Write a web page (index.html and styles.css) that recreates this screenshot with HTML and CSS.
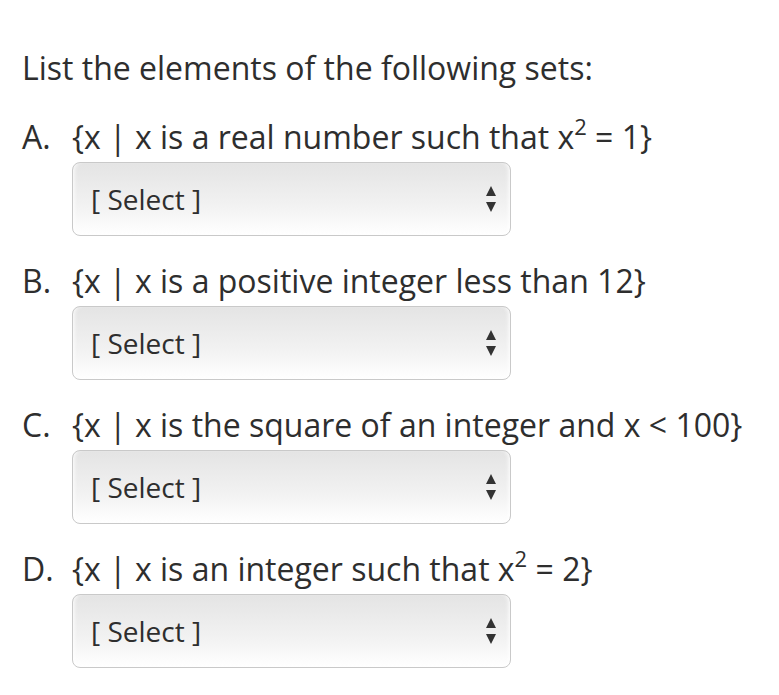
FILE: index.html
```html
<!DOCTYPE html>
<html lang="en">
<head>
  <meta charset="UTF-8" />
  <title>Sets question</title>
  <link rel="stylesheet" href="styles.css">
</head>
<body>

  <div class="question">
    <p class="prompt">List the elements of the following sets:</p>

    <div class="item">
      <div class="line"><span class="mark">A.</span>{x | x is a real number such that x<sup>2</sup> = 1}</div>
      <div class="pick">
        <select><option>[ Select ]</option></select>
        <svg class="arrows" width="10" height="26" viewBox="0 0 10 26"><path d="M5 0 L10 10 L0 10 Z M0 16 L10 16 L5 26 Z" fill="#333"/></svg>
      </div>
    </div>

    <div class="item">
      <div class="line"><span class="mark">B.</span>{x | x is a positive integer less than 12}</div>
      <div class="pick">
        <select><option>[ Select ]</option></select>
        <svg class="arrows" width="10" height="26" viewBox="0 0 10 26"><path d="M5 0 L10 10 L0 10 Z M0 16 L10 16 L5 26 Z" fill="#333"/></svg>
      </div>
    </div>

    <div class="item">
      <div class="line"><span class="mark">C.</span>{x | x is the square of an integer and x &lt; 100}</div>
      <div class="pick">
        <select><option>[ Select ]</option></select>
        <svg class="arrows" width="10" height="26" viewBox="0 0 10 26"><path d="M5 0 L10 10 L0 10 Z M0 16 L10 16 L5 26 Z" fill="#333"/></svg>
      </div>
    </div>

    <div class="item">
      <div class="line"><span class="mark">D.</span>{x | x is an integer such that x<sup>2</sup> = 2}</div>
      <div class="pick">
        <select><option>[ Select ]</option></select>
        <svg class="arrows" width="10" height="26" viewBox="0 0 10 26"><path d="M5 0 L10 10 L0 10 Z M0 16 L10 16 L5 26 Z" fill="#333"/></svg>
      </div>
    </div>
  </div>

</body>
</html>
```

FILE: styles.css
```css
body {
  margin: 0;
  background: #fff;
  color: #2e2e2e;
  font-family: "Open Sans", "DejaVu Sans", sans-serif;
}

.question {
  padding: 48px 0 0 22px;
}

.prompt {
  margin: 0 0 29px;
  font-size: 32px;
  line-height: 40px;
}

.item {
  margin-bottom: 25px;
}

.line {
  font-size: 32px;
  line-height: 40px;
  white-space: nowrap;
}

.mark {
  display: inline-block;
  width: 50px;
}

sup {
  font-size: 22px;
  line-height: 0;
  vertical-align: 14px;
}

.pick {
  position: relative;
  width: 439px;
  margin: 5px 0 0 50px;
}

.pick select {
  -webkit-appearance: none;
  appearance: none;
  display: block;
  width: 100%;
  height: 74px;
  padding: 0 16px 0 18px;
  border: 1px solid #c9c9c9;
  border-radius: 8px;
  background: linear-gradient(#e4e4e4, #f2f2f2 60%, #fff);
  box-shadow: inset 4px 0 4px -3px #fff, inset -4px 0 4px -3px #fff;
  color: #2e2e2e;
  font-family: "Open Sans", "DejaVu Sans", sans-serif;
  font-size: 28px;
}

.arrows {
  position: absolute;
  right: 15px;
  top: 24px;
  pointer-events: none;
}
```
